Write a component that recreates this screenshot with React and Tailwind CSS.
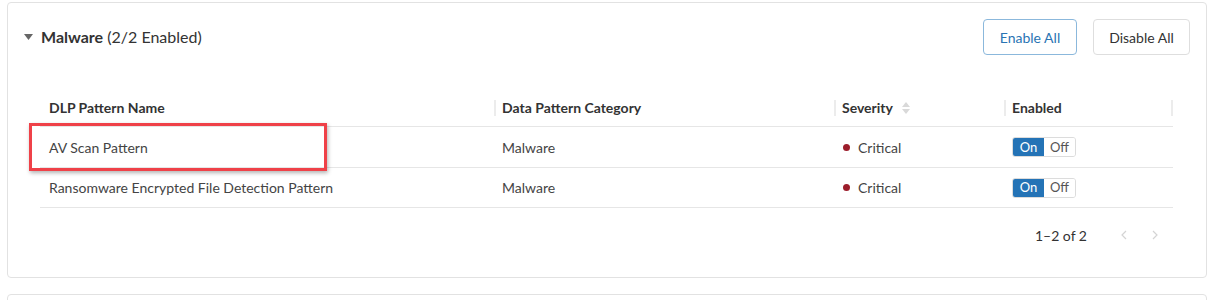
import { useState } from 'react';

const patterns = [
  { name: 'AV Scan Pattern', category: 'Malware', severity: 'Critical', enabled: true },
  { name: 'Ransomware Encrypted File Detection Pattern', category: 'Malware', severity: 'Critical', enabled: true },
];

const Divider = () => <span className="absolute left-0 top-[11px] h-[16px] w-[2px] bg-[#ececec]" />;

const Toggle = ({ on, onChange }) => (
  <div className="flex h-[20px] w-[64px] overflow-hidden rounded-[3px] border border-[#dcdcdc] text-[13px] leading-none">
    <button
      onClick={() => onChange(true)}
      className={`flex w-[31px] items-center justify-center ${on ? 'bg-[#2473b6] text-white' : 'bg-white text-[#555]'}`}
    >
      On
    </button>
    <button
      onClick={() => onChange(false)}
      className={`flex flex-1 items-center justify-center ${!on ? 'bg-[#2473b6] text-white' : 'bg-white text-[#555]'}`}
    >
      Off
    </button>
  </div>
);

const App = () => {
  const [rows, setRows] = useState(patterns);
  const enabledCount = rows.filter((r) => r.enabled).length;

  const setAll = (value) => setRows(rows.map((r) => ({ ...r, enabled: value })));
  const setOne = (i, value) => setRows(rows.map((r, j) => (j === i ? { ...r, enabled: value } : r)));

  return (
    <div className="h-[300px] overflow-hidden bg-white pl-[7px] pt-[2px] text-[#444]" style={{ fontFamily: 'Lato, "Noto Sans", sans-serif' }}>
      {/* Malware card */}
      <div className="h-[276px] w-[1200px] rounded-[4px] border border-[#e2e2e2] bg-white">
        <div className="flex items-start justify-between pl-[16px] pr-[16px] pt-[16px]">
          <div className="mt-[6px] flex items-center gap-[8px] text-[16px]">
            <svg width="9" height="6" viewBox="0 0 9 6">
              <path d="M0 0 H9 L4.5 6 Z" fill="#666" />
            </svg>
            <span className="text-[#333]">
              <span className="font-bold">Malware</span> ({enabledCount}/{rows.length} Enabled)
            </span>
          </div>
          <div className="flex gap-[16px]">
            <button
              onClick={() => setAll(true)}
              className="h-[36px] w-[94px] rounded-[4px] border border-[#8bb8dc] bg-white text-[14px] text-[#2a74b3]"
            >
              Enable All
            </button>
            <button
              onClick={() => setAll(false)}
              className="h-[36px] w-[97px] rounded-[4px] border border-[#dedede] bg-white text-[14px] text-[#333]"
            >
              Disable All
            </button>
          </div>
        </div>

        {/* Table */}
        <div className="relative ml-[32px] mt-[34px] w-[1133px]">
          <div className="grid h-[38px] grid-cols-[454px_340px_170px_169px] border-b border-[#e6e6e6] text-[14px] font-bold text-[#333]">
            <div className="flex items-center pl-[9px]">DLP Pattern Name</div>
            <div className="relative flex items-center pl-[8px]">
              <Divider />
              Data Pattern Category
            </div>
            <div className="relative flex items-center pl-[8px]">
              <Divider />
              Severity
              <svg className="ml-[9px]" width="8" height="12" viewBox="0 0 8 12">
                <path d="M4 0 L8 5 H0 Z" fill="#d9d9d9" />
                <path d="M4 12 L8 7 H0 Z" fill="#d9d9d9" />
              </svg>
            </div>
            <div className="relative flex items-center pl-[8px]">
              <Divider />
              Enabled
              <span className="absolute right-0 top-[11px] h-[16px] w-[2px] bg-[#ececec]" />
            </div>
          </div>

          {rows.map((r, i) => (
            <div
              key={r.name}
              className={`grid grid-cols-[454px_340px_170px_169px] border-b border-[#e6e6e6] text-[14px] text-[#444] ${i === 0 ? 'h-[41px]' : 'h-[40px]'}`}
            >
              <div className="flex items-center pl-[9px]">{r.name}</div>
              <div className="flex items-center pl-[8px]">{r.category}</div>
              <div className="flex items-center gap-[8px] pl-[9px]">
                <span className="h-[7px] w-[7px] rounded-full bg-[#9c1d2b]" />
                {r.severity}
              </div>
              <div className="flex items-center pl-[8px]">
                <Toggle on={r.enabled} onChange={(v) => setOne(i, v)} />
              </div>
            </div>
          ))}

          {/* annotation highlight */}
          <div className="pointer-events-none absolute left-[-11px] top-[34px] h-[48px] w-[298px] border-[3px] border-[#ef4148] shadow-[1px_2px_4px_rgba(0,0,0,0.3)]" />

          <div className="flex h-[54px] items-center justify-end pr-[15px] text-[14px] text-[#333]">
            <span>1–2 of 2</span>
            <svg className="ml-[34px]" width="6" height="10" viewBox="0 0 6 10">
              <path d="M5 1 L1 5 L5 9" fill="none" stroke="#d4d4d4" strokeWidth="1.2" />
            </svg>
            <svg className="ml-[25px]" width="6" height="10" viewBox="0 0 6 10">
              <path d="M1 1 L5 5 L1 9" fill="none" stroke="#d4d4d4" strokeWidth="1.2" />
            </svg>
          </div>
        </div>
      </div>

      {/* next card (cut off) */}
      <div className="mt-[16px] h-[40px] w-[1200px] rounded-[4px] border border-[#e2e2e2] bg-white" />
    </div>
  );
};

export default App;
